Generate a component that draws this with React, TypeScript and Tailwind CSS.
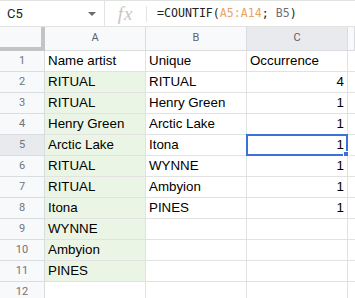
import React from "react";

const colA = ["Name artist","RITUAL","RITUAL","Henry Green","Arctic Lake","RITUAL","RITUAL","Itona","WYNNE","Ambyion","PINES",""];
const colB = ["Unique","RITUAL","Henry Green","Arctic Lake","Itona","WYNNE","Ambyion","PINES","","","",""];
const colC = ["Occurrence","4","1","1","1","1","1","1","","","",""];

export default function App() {
  return (
    <div className="w-[355px] h-[298px] overflow-hidden bg-white font-['Liberation_Sans',Arial,sans-serif]">
      {/* formula bar */}
      <div className="flex h-[27px] border-t border-b border-[#e1e3e1]">
        <div className="w-[104px] flex items-center justify-between pl-[7px] pr-[8px]">
          <span className="font-['Roboto',sans-serif] text-[13px] text-[#202124] leading-none">C5</span>
          <svg width="8" height="4" viewBox="0 0 8 4" className="mt-[1px]">
            <path d="M0 0 L8 0 L4 4 Z" fill="#6b6b6b" />
          </svg>
        </div>
        <div className="w-px bg-[#e3e3e3]" />
        <div className="w-[41px] flex items-center justify-center">
          <span className="font-['Liberation_Serif',serif] italic text-[19px] leading-none text-[#c6c6c6] tracking-[1px]">fx</span>
        </div>
        <div className="w-px h-[16px] self-center bg-[#e3e3e3]" />
        <div className="flex items-center pl-[10px] font-['DejaVu_Sans_Mono',monospace] text-[11.6px] text-[#222] whitespace-pre">
          <span>=COUNTIF(</span>
          <span className="text-[#e9a466]">A5:A14</span>
          <span>; </span>
          <span className="text-[#707070]">B5</span>
          <span>)</span>
        </div>
      </div>

      {/* grid */}
      <div className="grid grid-cols-[45px_101px_101px_101px_1fr]">
        {/* header row */}
        <div className="h-[24px] bg-[#f8f9fa] border-r-4 border-b-4 border-[#c4c4c4]" />
        {["A", "B", "C", ""].map((l, i) => (
          <div
            key={i}
            className={
              "h-[24px] border-r border-b border-[#dadce0] flex items-center justify-center font-['Roboto',sans-serif] text-[11px] text-[#5f6368] " +
              (l === "C" ? "bg-[#e8eaed]" : "bg-[#f8f9fa]")
            }
          >
            {l}
          </div>
        ))}

        {colA.map((a, r) => {
          const rowNum = r + 1;
          const sel = rowNum === 5;
          return (
            <React.Fragment key={r}>
              <div
                className={
                  "h-[21px] border-r border-b border-[#dadce0] flex items-center justify-center font-['Roboto',sans-serif] text-[11px] text-[#70757a] " +
                  (sel ? "bg-[#e8eaed]" : "bg-[#f8f9fa]")
                }
              >
                {rowNum}
              </div>
              <div
                className={
                  "h-[21px] border-r border-b border-[#e2e2e2] flex items-center pl-[3px] text-[13.33px] text-black whitespace-nowrap overflow-hidden " +
                  (rowNum >= 2 && rowNum <= 11 ? "bg-[#ebf5e6]" : "bg-white")
                }
              >
                {a}
              </div>
              <div className="h-[21px] border-r border-b border-[#e2e2e2] flex items-center pl-[3px] text-[13.33px] text-black whitespace-nowrap overflow-hidden">
                {colB[r]}
              </div>
              <div
                className={
                  "relative h-[21px] border-r border-b border-[#e2e2e2] flex items-center text-[13.33px] text-black whitespace-nowrap " +
                  (rowNum === 1 ? "pl-[3px]" : "justify-end pr-[3px]")
                }
              >
                {colC[r]}
                {sel && (
                  <div className="absolute -top-px -left-px right-[-1px] bottom-[-1px] border-2 border-[#3a72d8]">
                    <div className="absolute right-[-3px] bottom-[-3px] w-[6px] h-[6px] bg-[#3a72d8] border border-white" />
                  </div>
                )}
              </div>
              <div className="h-[21px] border-b border-[#e2e2e2]" />
            </React.Fragment>
          );
        })}
      </div>
    </div>
  );
}
